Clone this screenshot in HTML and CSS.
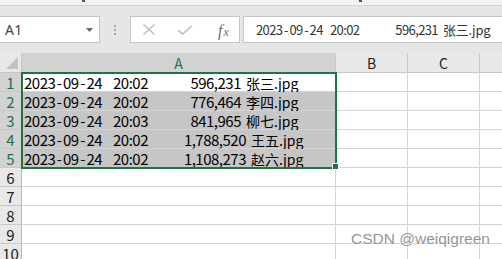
FILE: index.html
```html
<!DOCTYPE html>
<html lang="zh">
<head>
<meta charset="utf-8">
<title>Sheet</title>
<link rel="stylesheet" href="styles.css">
</head>
<body>
<div class="strip"><span class="mark m1"></span><span class="mark m2"></span></div>
<div class="fbar">
  <div class="namebox">
    <span class="ref">A1</span>
    <svg class="tri" width="7" height="4" viewBox="0 0 7 4"><polygon points="0,0 7,0 3.5,4" fill="#666"/></svg>
  </div>
  <div class="grip"><i></i><i></i><i></i></div>
  <div class="fbtns">
    <div class="slot"><svg width="12" height="11" viewBox="0 0 12 11"><path d="M0.5 0.5 L11.5 10.5 M11.5 0.5 L0.5 10.5" stroke="#bdbdbd" stroke-width="1.4" fill="none"/></svg></div>
    <div class="slot"><svg width="16" height="10" viewBox="0 0 16 10"><path d="M1 5 L5.5 9 L15 1" stroke="#bdbdbd" stroke-width="1.6" fill="none"/></svg></div>
    <div class="slot fx"><span class="f">f</span><span class="x">x</span></div>
  </div>
  <div class="formula">
    <span class="fd">2023<span class="hy">-</span>09<span class="hy">-</span>24</span><span class="ft">20:02</span><span class="fn">596,231</span><span class="ff">张三.jpg</span>
  </div>
</div>
<div class="sheet">
  <div class="hd corner"><svg width="13" height="13" viewBox="0 0 13 13"><polygon points="12,0 12,12 0,12" fill="#c2c2c2"/></svg></div>
  <div class="hd col sel">A</div>
  <div class="hd col">B</div>
  <div class="hd col">C</div>
  <div class="hd col"></div>

  <div class="hd row sel">1</div>
  <div class="cell a"><span class="d">2023<span class="hy">-</span>09<span class="hy">-</span>24</span><span class="t">20:02</span><span class="n">596,231</span><span class="f">张三.jpg</span></div>
  <div class="cell"></div><div class="cell"></div><div class="cell"></div>

  <div class="hd row sel">2</div>
  <div class="cell a fill"><span class="d">2023<span class="hy">-</span>09<span class="hy">-</span>24</span><span class="t">20:02</span><span class="n">776,464</span><span class="f">李四.jpg</span></div>
  <div class="cell"></div><div class="cell"></div><div class="cell"></div>

  <div class="hd row sel">3</div>
  <div class="cell a fill"><span class="d">2023<span class="hy">-</span>09<span class="hy">-</span>24</span><span class="t">20:03</span><span class="n">841,965</span><span class="f">柳七.jpg</span></div>
  <div class="cell"></div><div class="cell"></div><div class="cell"></div>

  <div class="hd row sel">4</div>
  <div class="cell a fill"><span class="d">2023<span class="hy">-</span>09<span class="hy">-</span>24</span><span class="t">20:02</span><span class="n w">1,788,520</span><span class="f">王五.jpg</span></div>
  <div class="cell"></div><div class="cell"></div><div class="cell"></div>

  <div class="hd row sel">5</div>
  <div class="cell a fill"><span class="d">2023<span class="hy">-</span>09<span class="hy">-</span>24</span><span class="t">20:02</span><span class="n w">1,108,273</span><span class="f">赵六.jpg</span></div>
  <div class="cell"></div><div class="cell"></div><div class="cell"></div>

  <div class="hd row">6</div><div class="cell"></div><div class="cell"></div><div class="cell"></div><div class="cell"></div>
  <div class="hd row">7</div><div class="cell"></div><div class="cell"></div><div class="cell"></div><div class="cell"></div>
  <div class="hd row">8</div><div class="cell"></div><div class="cell"></div><div class="cell"></div><div class="cell"></div>
  <div class="hd row">9</div><div class="cell"></div><div class="cell"></div><div class="cell"></div><div class="cell"></div>
  <div class="hd row">10</div><div class="cell"></div><div class="cell"></div><div class="cell"></div><div class="cell"></div>

  <div class="selbox"></div>
  <div class="handle"></div>
  <div class="wm">CSDN @weiqigreen</div>
</div>
</body>
</html>
```
FILE: styles.css
```css
html, body {
  margin: 0;
  padding: 0;
}
body {
  width: 502px;
  height: 259px;
  overflow: hidden;
  background: #ffffff;
  font-family: "Noto Sans CJK JP", "Noto Sans CJK SC", sans-serif;
  color: #000;
}

/* top ribbon edge */
.strip {
  height: 5px;
  background: #f3f3f3;
  border-bottom: 1px solid #d5d5d5;
  display: flex;
}
.mark {
  display: block;
  width: 3px;
  height: 2px;
  background: #555;
}
.m1 { margin-left: 82px; }
.m2 { margin-left: 274px; }

/* formula bar */
.fbar {
  height: 47px;
  box-sizing: border-box;
  padding: 10px 0;
  background: #e6e6e6;
  display: flex;
}
.namebox {
  width: 101px;
  margin-left: -1px;
  box-sizing: border-box;
  border: 1px solid #c6c6c6;
  background: #fff;
  display: flex;
  align-items: center;
  justify-content: space-between;
  padding: 0 6px 0 5px;
}
.ref {
  font-family: "Noto Sans", "DejaVu Sans", sans-serif;
  font-size: 14px;
  color: #444;
  letter-spacing: 0.3px;
}
.tri { display: block; }
.grip {
  width: 30px;
  display: flex;
  flex-direction: column;
  align-items: center;
  justify-content: center;
  gap: 2px;
}
.grip i {
  display: block;
  width: 2px;
  height: 2px;
  background: #a8a8a8;
}
.fbtns {
  width: 110px;
  box-sizing: border-box;
  border: 1px solid #c6c6c6;
  background: #fff;
  display: flex;
}
.slot {
  width: 36px;
  display: flex;
  align-items: center;
  justify-content: center;
}
.fx {
  font-family: "Liberation Serif", serif;
  font-style: italic;
  color: #6e6e6e;
  align-items: baseline;
  padding-top: 5px;
  box-sizing: border-box;
}
.fx .f { font-size: 16px; }
.fx .x { font-size: 12px; margin-left: 1px; }
.formula {
  flex: 1;
  margin-left: 3px;
  margin-right: -2px;
  box-sizing: border-box;
  border: 1px solid #c6c6c6;
  background: #fff;
  display: flex;
  align-items: center;
  padding-left: 12px;
  font-size: 13px;
  color: #333;
  letter-spacing: -0.6px;
  white-space: nowrap;
}
.fd { width: 74px; flex: none; }
.ft { width: 28px; flex: none; }
.fn { width: 80px; flex: none; text-align: right; }
.ff { margin-left: 5px; letter-spacing: -0.2px; }

/* sheet grid */
.sheet {
  position: relative;
  display: grid;
  grid-template-columns: 22px 314px 72px 72px 40px;
  grid-template-rows: 20px;
  grid-auto-rows: 19px;
}
.cell {
  box-sizing: border-box;
  border-right: 1px solid #d4d4d4;
  border-bottom: 1px solid #d4d4d4;
  background: #fff;
}
.hd {
  box-sizing: border-box;
  background: #e8e8e8;
  border-right: 1px solid #c8c8c8;
  border-bottom: 1px solid #c8c8c8;
  color: #222;
  display: flex;
  justify-content: center;
  align-items: flex-end;
  line-height: 16px;
}
.corner {
  justify-content: flex-end;
  align-items: flex-end;
  padding: 0 2px 2px 0;
}
.corner svg { display: block; }
.col {
  font-size: 14px;
  padding-bottom: 1px;
}
.row {
  font-size: 15px;
  border-right-color: #b9b9b9;
}
.hd.sel {
  background: #d2d2d2;
  color: #217346;
}

/* column A cell text */
.a {
  display: flex;
  align-items: flex-end;
  padding-left: 2px;
  font-size: 15px;
  line-height: 16px;
  letter-spacing: -0.5px;
  white-space: nowrap;
}
.fill { background: #c6c6c6; }
.d { width: 89px; flex: none; }
.hy { padding: 0 1.5px; }
.t { width: 40px; flex: none; }
.n { width: 88px; flex: none; text-align: right; }
.n.w { width: 93px; }
.f { margin-left: 5px; font-size: 14px; letter-spacing: 0; }

/* selection overlay */
.selbox {
  position: absolute;
  left: 21px;
  top: 19px;
  width: 316px;
  height: 97px;
  box-sizing: border-box;
  border: 2px solid #217346;
  pointer-events: none;
}
.handle {
  position: absolute;
  left: 332px;
  top: 110px;
  width: 7px;
  height: 7px;
  box-sizing: border-box;
  border: 1px solid #fff;
  background: #217346;
}
.wm {
  position: absolute;
  left: 351px;
  top: 177px;
  font-family: "Liberation Sans", Arial, sans-serif;
  font-size: 15.5px;
  line-height: 18px;
  color: rgba(110, 110, 110, 0.75);
  text-shadow: 0 0 1px #fff, 0 0 1px #fff;
  white-space: nowrap;
}
```
